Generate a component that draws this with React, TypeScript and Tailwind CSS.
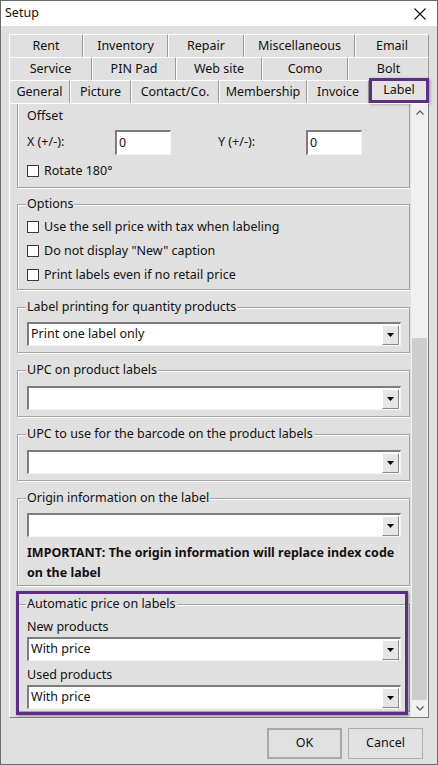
import React from "react";

const tabRows: [string, string][][] = [
  [
    ["Rent", "w-[74px]"],
    ["Inventory", "w-[85px]"],
    ["Repair", "w-[76px]"],
    ["Miscellaneous", "w-[111px]"],
    ["Email", "w-[74px]"],
  ],
  [
    ["Service", "w-[83px]"],
    ["PIN Pad", "w-[84px]"],
    ["Web site", "w-[86px]"],
    ["Como", "w-[86px]"],
    ["Bolt", "w-[81px]"],
  ],
  [
    ["General", "w-[61px]"],
    ["Picture", "w-[61px]"],
    ["Contact/Co.", "w-[88px]"],
    ["Membership", "w-[88px]"],
    ["Invoice", "w-[62px]"],
    ["Label", "w-[60px]"],
  ],
];

function Tab({ label, w }: { label: string; w: string }) {
  if (label === "Label") {
    return (
      <div
        className={`${w} -mt-[2px] h-[25px] flex justify-center pt-[1px] border-[3px] border-[#5e2d88] bg-[#e3e3e3] shadow-[1px_1px_3px_rgba(0,0,0,0.35)]`}
      >
        <span className="leading-[16px]">Label</span>
      </div>
    );
  }
  return (
    <div
      className={`${w} h-[23px] flex items-center justify-center border-t border-l border-t-white border-l-white border-r border-r-[#9b9b9b]`}
    >
      {label}
    </div>
  );
}

function DropArrow() {
  return (
    <div className="w-[17px] h-[20px] mt-px mr-px flex items-center justify-center bg-[#e6e6e6] border-t border-l border-t-white border-l-white border-r border-b border-r-[#8c8c8c] border-b-[#8c8c8c]">
      <svg width="7" height="4" viewBox="0 0 7 4">
        <path d="M0 0h7L3.5 4z" fill="#000" />
      </svg>
    </div>
  );
}

function Combo({ value, className = "" }: { value?: string; className?: string }) {
  return (
    <div
      className={`ml-[9px] mr-[8px] h-[24px] flex items-start bg-white border-t-2 border-l-2 border-t-[#7d7d7d] border-l-[#7d7d7d] border-b border-r border-b-[#f4f4f4] border-r-[#f4f4f4] ${className}`}
    >
      <span className="flex-1 pl-[2px] leading-[20px]">{value}</span>
      <DropArrow />
    </div>
  );
}

function Check({ label, className = "" }: { label: string; className?: string }) {
  return (
    <div className={`ml-[9px] h-[16px] flex items-center ${className}`}>
      <span className="w-[12px] h-[12px] bg-white border border-[#3a3a3a]" />
      <span className="ml-[5px] leading-[16px]">{label}</span>
    </div>
  );
}

function Group({
  caption,
  className = "",
  children,
}: {
  caption: string;
  className?: string;
  children: React.ReactNode;
}) {
  return (
    <fieldset
      className={`border border-[#a3a3a3] shadow-[inset_1px_1px_0_#fff,1px_1px_0_#fff] ${className}`}
    >
      <legend className="ml-[8px] px-px bg-[#e0e0e0] leading-[16px]">{caption}</legend>
      {children}
    </fieldset>
  );
}

function TextBox() {
  return (
    <div className="w-[56px] h-[25px] bg-white border-t-2 border-l-2 border-t-[#7d7d7d] border-l-[#7d7d7d] border-b border-r border-b-[#f4f4f4] border-r-[#f4f4f4] pl-[2px] leading-[21px]">
      0
    </div>
  );
}

function Chevron({ up }: { up?: boolean }) {
  return (
    <svg width="8" height="5" viewBox="0 0 8 5">
      <path
        d={up ? "M0.5 4.5L4 1l3.5 3.5" : "M0.5 0.5L4 4l3.5-3.5"}
        fill="none"
        stroke="#606060"
        strokeWidth="1.3"
      />
    </svg>
  );
}

export default function App() {
  return (
    <div className="w-[438px] h-[765px] flex flex-col border border-[#6a6a6a] bg-[#e0e0e0] text-[12.5px] text-[#111] font-['Noto_Sans',sans-serif] overflow-hidden">
      {/* title bar */}
      <div className="h-[25px] shrink-0 bg-white flex items-center justify-between pl-[4px] pr-[11px]">
        <span>Setup</span>
        <svg width="12" height="12" viewBox="0 0 12 12">
          <path d="M0.5 0.5l11 11M11.5 0.5l-11 11" stroke="#111" strokeWidth="1.1" />
        </svg>
      </div>

      <div className="flex-1 flex flex-col px-[8px] pt-[8px]">
        {/* tabs */}
        {tabRows.map((row, i) => (
          <div key={i} className="flex items-end">
            {row.map(([label, w]) => (
              <Tab key={label} label={label} w={w} />
            ))}
          </div>
        ))}

        {/* tab panel */}
        <div className="h-[615px] flex border-t border-l border-t-white border-l-white border-r border-b border-r-[#7a7a7a] border-b-[#7a7a7a]">
          <div className="w-[400px] pl-[7px] flex flex-col overflow-hidden">
            <div className="w-[393px] flex flex-col">
              {/* Offset */}
              <div className="border-l border-r border-b border-[#a3a3a3] shadow-[inset_1px_0_0_#fff,1px_1px_0_#fff] pt-[4px] pb-[8px]">
                <div className="ml-[9px] leading-[16px]">Offset</div>
                <div className="mt-[6px] flex items-center">
                  <span className="ml-[9px] w-[88px]">X (+/-):</span>
                  <TextBox />
                  <span className="ml-[47px] w-[88px]">Y (+/-):</span>
                  <TextBox />
                </div>
                <Check label="Rotate 180°" className="mt-[8px]" />
              </div>

              <Group caption="Options" className="mt-[8px] pb-[6px]">
                <Check label="Use the sell price with tax when labeling" className="mt-[7px]" />
                <Check label={'Do not display "New" caption'} className="mt-[8px]" />
                <Check label="Print labels even if no retail price" className="mt-[8px]" />
              </Group>

              <Group caption="Label printing for quantity products" className="mt-[9px] pb-[6px]">
                <Combo value="Print one label only" className="mt-[7px]" />
              </Group>

              <Group caption="UPC on product labels" className="mt-[9px] pb-[6px]">
                <Combo className="mt-[8px]" />
              </Group>

              <Group
                caption="UPC to use for the barcode on the product labels"
                className="mt-[9px] pb-[6px]"
              >
                <Combo className="mt-[8px]" />
              </Group>

              <Group caption="Origin information on the label" className="mt-[9px] pb-[2px]">
                <Combo className="mt-[7px]" />
                <p className="mt-[6px] ml-[9px] font-bold leading-[20px]">
                  <span className="whitespace-nowrap">
                    IMPORTANT: The origin information will replace index code
                  </span>
                  <br />
                  on the label
                </p>
              </Group>

              <div className="relative mt-[10px]">
                <Group caption="Automatic price on labels" className="pb-[2px]">
                  <div className="mt-[7px] ml-[9px] leading-[16px]">New products</div>
                  <Combo value="With price" className="mt-[2px]" />
                  <div className="mt-[6px] ml-[9px] leading-[16px]">Used products</div>
                  <Combo value="With price" className="mt-[2px]" />
                </Group>
                <div className="absolute -top-[5px] -left-[1px] right-[2px] -bottom-[3px] border-[3px] border-[#5e2d88] shadow-[1px_1px_3px_rgba(0,0,0,0.35)]" />
              </div>
            </div>
          </div>

          {/* scrollbar */}
          <div className="ml-[1px] w-[17px] flex flex-col bg-[#f0f0f0]">
            <div className="h-[17px] flex items-center justify-center">
              <Chevron up />
            </div>
            <div className="h-[217px]" />
            <div className="flex-1 mx-[1px] bg-[#cdcdcd]" />
            <div className="h-[17px] flex items-center justify-center">
              <Chevron />
            </div>
          </div>
        </div>

        {/* buttons */}
        <div className="mt-[10px] flex justify-end gap-[6px] pr-[6px]">
          <button className="w-[75px] h-[31px] bg-[#e1e1e1] border-2 border-[#a8a8a8]">OK</button>
          <button className="w-[75px] h-[31px] bg-[#e1e1e1] border border-[#adadad]">Cancel</button>
        </div>
      </div>
    </div>
  );
}
